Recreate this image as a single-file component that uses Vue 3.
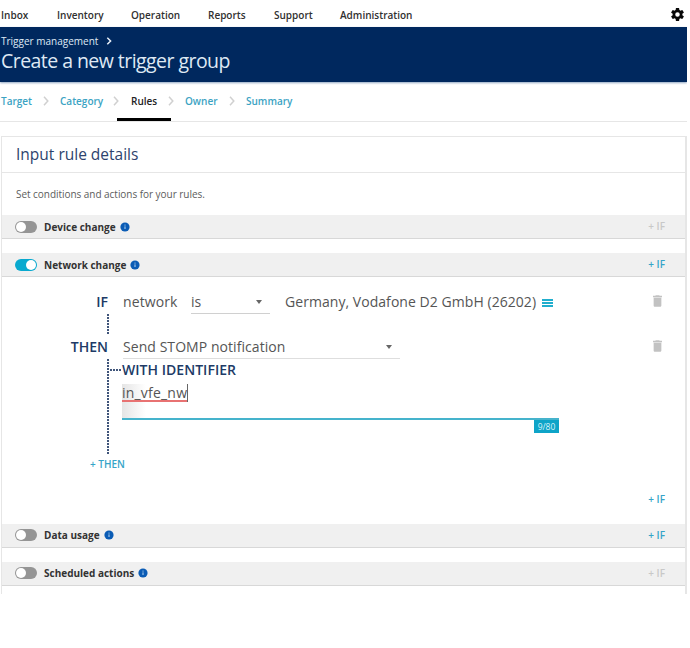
<script setup>
const menu = [
  { label: 'Inbox', w: 56 },
  { label: 'Inventory', w: 74 },
  { label: 'Operation', w: 77 },
  { label: 'Reports', w: 66 },
  { label: 'Support', w: 66 },
  { label: 'Administration', w: 90 }
]
const steps = [
  { label: 'Target', w: 59 },
  { label: 'Category', w: 70 },
  { label: 'Rules', w: 54, active: true },
  { label: 'Owner', w: 61 },
  { label: 'Summary', w: 50 }
]
const sections = [
  { label: 'Device change', on: false, add: false },
  { label: 'Network change', on: true, add: true, open: true },
  { label: 'Data usage', on: false, add: true },
  { label: 'Scheduled actions', on: false, add: false }
]
</script>

<template>
  <div class="page">
    <nav class="menu">
      <span v-for="m in menu" :key="m.label" :style="{ width: m.w + 'px' }">{{ m.label }}</span>
      <svg class="gear" viewBox="2 2 20 20">
        <path fill-rule="evenodd" d="M19.43 12.98c.04-.32.07-.64.07-.98s-.03-.66-.07-.98l2.11-1.65c.19-.15.24-.42.12-.64l-2-3.46c-.12-.22-.39-.3-.61-.22l-2.49 1c-.52-.4-1.08-.73-1.69-.98l-.38-2.65A.49.49 0 0 0 14 2h-4a.49.49 0 0 0-.49.42l-.38 2.65c-.61.25-1.17.59-1.69.98l-2.49-1a.49.49 0 0 0-.61.22l-2 3.46c-.13.22-.07.49.12.64l2.11 1.65c-.04.32-.07.65-.07.98s.03.66.07.98l-2.11 1.65a.49.49 0 0 0-.12.64l2 3.46c.12.22.39.3.61.22l2.49-1c.52.4 1.08.73 1.69.98l.38 2.65c.03.24.24.42.49.42h4c.25 0 .46-.18.49-.42l.38-2.65c.61-.25 1.17-.59 1.69-.98l2.49 1c.23.09.49 0 .61-.22l2-3.46a.49.49 0 0 0-.12-.64zM12 15.500a3.500 3.500 0 1 1 0-7 3.500 3.500 0 0 1 0 7z" />
      </svg>
    </nav>

    <header class="banner">
      <div class="crumb">
        <span>Trigger management</span>
        <svg viewBox="0 0 6 8"><path d="M1.3.8 4.6 4 1.3 7.2" /></svg>
      </div>
      <h1>Create a new trigger group</h1>
    </header>

    <div class="steps">
      <div v-for="(s, i) in steps" :key="s.label" class="step" :class="{ active: s.active }" :style="{ width: s.w + 'px' }">
        <span>{{ s.label }}</span>
        <svg v-if="i < 4" viewBox="0 0 6 10"><path d="M1 .8 4.8 5 1 9.2" /></svg>
      </div>
    </div>

    <main class="card">
      <h2>Input rule details</h2>
      <p class="intro">Set conditions and actions for your rules.</p>
      <section v-for="s in sections" :key="s.label" class="section">
        <div class="bar">
          <span class="toggle" :class="{ on: s.on }"><i></i></span>
          <b>{{ s.label }}</b>
          <svg class="info" viewBox="0 0 10 10">
            <circle cx="5" cy="5" r="4.6" fill="#0b5cb5" />
            <path d="M5 4.4v2.6M5 2.6v1" stroke="#b9d6f2" stroke-width="1" />
          </svg>
          <span class="add" :class="{ off: !s.add }">+ IF</span>
        </div>
        <div v-if="s.open" class="rule">
          <div class="row">
            <span class="key">IF</span>
            <span class="word">network</span>
            <span class="select op"><span>is</span><i class="caret"></i></span>
            <span class="value">Germany, Vodafone D2 GmbH (26202)</span>
            <svg class="list" viewBox="0 0 11 8"><path d="M0 1h11M0 4h11M0 7h11" /></svg>
            <svg class="trash" viewBox="5 3 14 18"><path d="M6 19c0 1.100.9 2 2 2h8c1.100 0 2-.9 2-2V7H6v12zM19 4h-3.500l-1-1h-5l-1 1H5v2h14V4z" /></svg>
          </div>
          <div class="link"></div>
          <div class="row">
            <span class="key then">THEN</span>
            <span class="select action"><span>Send STOMP notification</span><i class="caret"></i></span>
            <svg class="trash" viewBox="5 3 14 18"><path d="M6 19c0 1.100.9 2 2 2h8c1.100 0 2-.9 2-2V7H6v12zM19 4h-3.500l-1-1h-5l-1 1H5v2h14V4z" /></svg>
          </div>
          <div class="detail">
            <div class="branch"></div>
            <div class="field">
              <div class="with">WITH IDENTIFIER</div>
              <div class="input"><span class="typed">in_vfe_nw</span><i class="cursor"></i></div>
              <div class="count">9/80</div>
            </div>
          </div>
          <div class="add then-add">+ THEN</div>
          <div class="add if-add">+ IF</div>
        </div>
      </section>
    </main>
  </div>
</template>

<style>
body { background: #fff; }
</style>
<style scoped>
* { box-sizing: border-box; }
.page { width: 687px; height: 648px; font-family: "Open Sans", "Noto Sans", sans-serif; color: #555; white-space: nowrap; overflow: hidden; }
.menu { height: 27px; padding: 2px 3px 0 1px; display: flex; align-items: center; font-size: 10px; font-weight: 600; color: #303030; }
.menu span { flex: none; }
.gear { width: 13px; height: 13px; margin-left: auto; fill: #080808; }
.banner { height: 55px; background: #00285e; padding: 6px 1px 0; color: #dfe9f4; box-shadow: 0 1px 2px #8fa6c2; }
.crumb { display: flex; align-items: center; height: 15px; font-size: 10px; gap: 8px; }
.crumb svg { width: 6px; height: 8px; fill: none; stroke: #e8eff7; stroke-width: 1.5; }
h1 { margin: 0; font-size: 19.500px; line-height: 25px; font-weight: 400; letter-spacing: -0.55px; }
.steps { height: 40px; display: flex; padding-left: 1px; border-bottom: 1px solid #e6e6e6; font-size: 10px; font-weight: 600; color: #3ba3c3; }
.step { display: flex; align-items: center; height: 38px; }
.step svg { width: 6px; height: 10px; margin-left: auto; margin-right: 11px; fill: none; stroke: #d0d0d0; stroke-width: 1.5; }
.step.active { height: 39px; color: #222; border-bottom: 3px solid #000; padding: 2px 0 0 0; margin-left: -13px; margin-right: 14px; }
.step.active span { padding-left: 14px; }
.step.active svg { margin-right: -3px; }
.card { margin: 14px 0 0 1px; height: 458px; border: solid #e6e6e6; border-width: 1px 2px 0 1px; }
h2 { margin: 0; height: 36px; line-height: 34px; padding-left: 14px; font-size: 15.500px; font-weight: 400; color: #2d436d; border-bottom: 1px solid #e6e6e6; }
.intro { margin: 0; height: 42px; line-height: 43px; padding-left: 14px; font-size: 10px; letter-spacing: -0.04px; color: #5c5c5c; }
.section { margin-bottom: 14px; }
.section:nth-last-child(-n+2) .bar { padding-bottom: 1px; }
.bar { height: 24px; display: flex; align-items: center; padding: 0 20px 0 13px; background: #f0f0f0; border-bottom: 1px solid #d8d8d8; font-size: 10px; color: #333; }
.toggle { width: 22px; height: 12px; padding: 1px; border-radius: 6px; background: #959595; margin-right: 7px; display: flex; }
.toggle i { width: 10px; height: 10px; border-radius: 50%; background: #fff; }
.toggle.on { background: #08a9cf; justify-content: flex-end; }
.info { width: 10px; height: 10px; margin-left: 4px; }
.add { font-size: 10px; font-weight: 600; color: #36a4c8; }
.bar .add { margin-left: auto; margin-top: -1px; }
.add.off { color: #c8c8c8; }
.rule { height: 233px; padding-top: 13px; font-size: 14px; }
.row { height: 24px; display: flex; align-items: center; padding-right: 23px; }
.row:first-child > span:not(.select) { padding-bottom: 2px; }
.key { width: 106px; margin-right: 15px; text-align: right; font-weight: 600; color: #203a66; font-size: 14px; }
.key.then { padding-bottom: 2px; }
.word { width: 68px; letter-spacing: 0.1px; }
.select { height: 24px; display: flex; align-items: center; justify-content: space-between; border-bottom: 1px solid #d0d0d0; }
.op { width: 79px; padding-right: 8px; margin-right: 15px; }
.action { width: 277px; padding-right: 8px; letter-spacing: 0.06px; border-color: #dedede; }
.caret { border: 3.500px solid transparent; border-top: 4px solid #666; border-bottom: 0; }
.value { letter-spacing: 0.05px; }
.list { width: 11px; height: 8px; margin-left: 6px; margin-top: 2px; stroke: #21aecd; stroke-width: 2; }
.trash { width: 9px; height: 12px; margin-left: auto; margin-bottom: 2px; fill: #c2c2c2; }
.link { width: 2px; height: 21px; margin-left: 105px; background: repeating-linear-gradient(#40557a 0 2px, #fff 2px 3px); }
.detail { display: flex; padding-left: 105px; height: 95px; }
.branch { width: 16px; height: 95px; background: repeating-linear-gradient(#40557a 0 2px, #fff 2px 3px) 0 0 / 2px 95px no-repeat, repeating-linear-gradient(90deg, #40557a 0 2px, #fff 2px 3px) 0 10px / 15px 2px no-repeat; }
.field { width: 436px; margin-left: -1px; display: flex; flex-direction: column; width: 437px; }
.with { height: 25px; line-height: 22px; font-size: 14px; font-weight: 600; letter-spacing: 0.03px; color: #203a66; }
.input { height: 36px; display: flex; align-items: flex-start; border-bottom: 2px solid #45b3cc; background: linear-gradient(90deg, #e5e5e5, #fff) 0 0 / 24px 100% no-repeat; }
.typed { line-height: 17px; height: 18px; box-shadow: inset 0 -2px #e87272; letter-spacing: 0.2px; }
.cursor { width: 1px; height: 18px; background: #666; }
.count { align-self: flex-end; width: 25px; height: 13px; line-height: 13px; text-align: center; background: #0ea4c8; color: #d9f3fa; font-size: 8.500px; }
.then-add { padding-left: 88px; line-height: 14px; margin-top: 3px; }
.if-add { text-align: right; padding-right: 20px; line-height: 14px; margin-top: 21px; }
</style>
